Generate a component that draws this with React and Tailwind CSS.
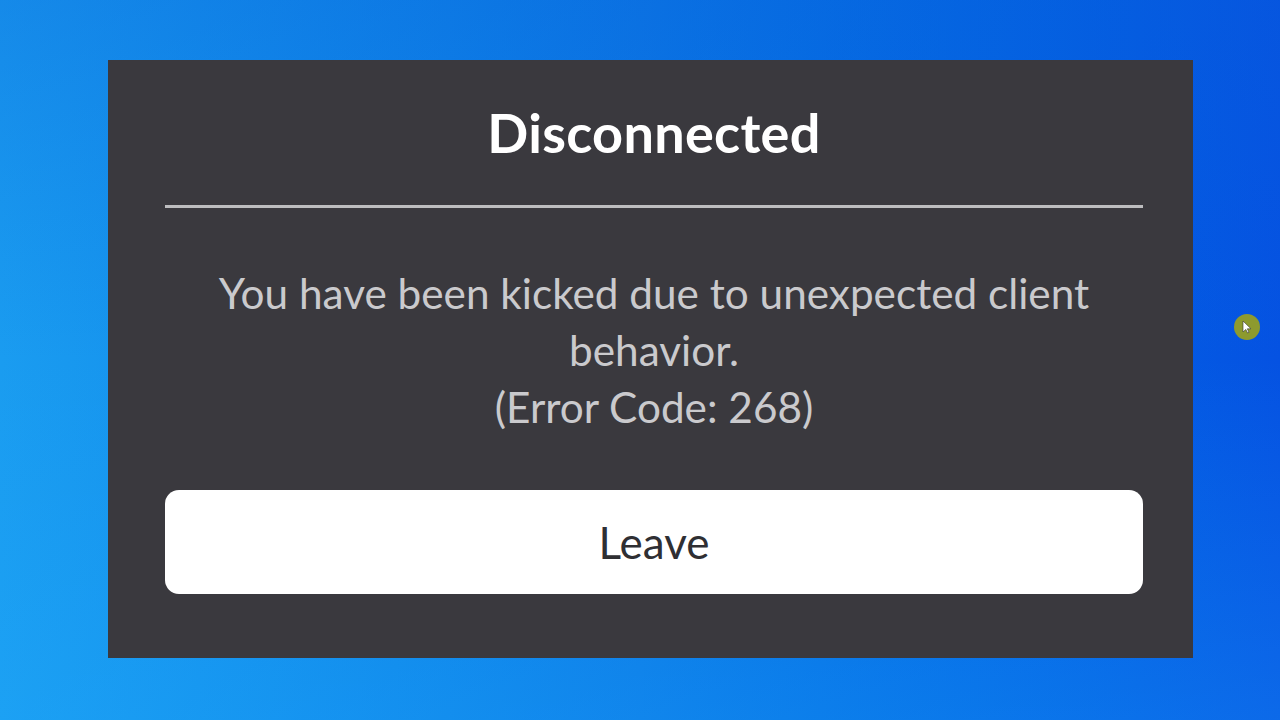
export default function App() {
  return (
    <div className="relative w-[1280px] h-[720px] overflow-hidden bg-gradient-to-r from-[#1a9cf0] via-[#0b78e6] to-[#0552e2] font-['Lato',sans-serif]">
      <div className="absolute inset-0 bg-gradient-to-b from-[#0a5fd8]/30 via-transparent to-[#22b0ff]/25" />

      <div className="relative pt-[60px] pl-[108px]">
        <div className="w-[1085px] h-[598px] bg-[#3a393e] pl-[57px] pr-[50px] pt-[42px] flex flex-col">
          <h1 className="text-center text-white font-bold text-[54px] leading-[62px] tracking-[0.3px]">
            Disconnected
          </h1>
          <div className="mt-[41px] h-[3px] bg-[#bdbdbf]" />
          <p className="mt-[56px] text-center text-[#cacacd] text-[42.3px] leading-[57px]">
            You have been kicked due to unexpected client
            <br />
            behavior.
            <br />
            (Error Code: 268)
          </p>
          <button className="mt-[55px] h-[104px] w-full rounded-[14px] bg-white text-[#2f2f33] text-[44px] leading-none">
            Leave
          </button>
        </div>
      </div>

      <div className="absolute left-[1234px] top-[314px] w-[26px] h-[26px] rounded-full bg-[#8d9a2e] flex items-center justify-center">
        <svg width="10" height="14" viewBox="0 0 10 14">
          <path d="M1 1 L1 12 L3.8 9.4 L5.6 13 L7 12.3 L5.3 8.8 L9 8.8 Z" fill="#ffffff" stroke="#333" strokeWidth="0.6" />
        </svg>
      </div>
    </div>
  );
}
